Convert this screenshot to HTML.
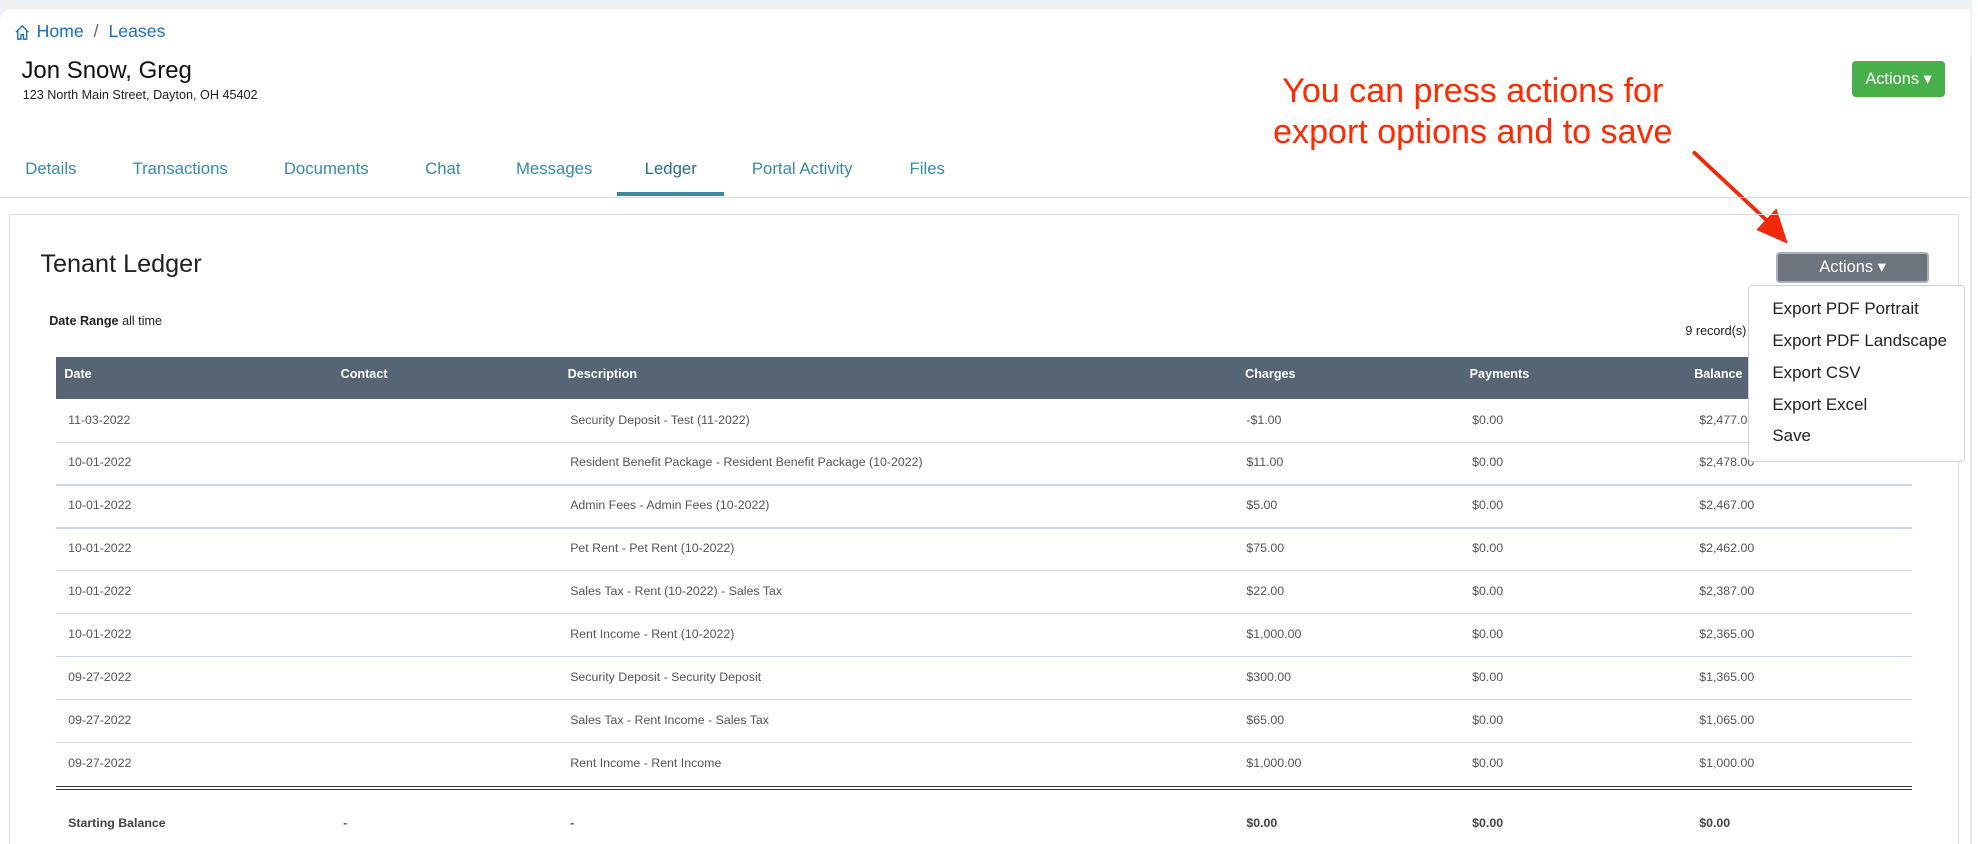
<!DOCTYPE html>
<html><head><meta charset="utf-8"><style>
html,body{margin:0;padding:0;}
body{width:1978px;height:843px;overflow:hidden;background:#fff;font-family:"Liberation Sans",sans-serif;}
#w{zoom:1.2615;width:1568px;height:669px;position:relative;background:#eef1f4;overflow:hidden;}
.a{position:absolute;white-space:nowrap;}
.card{position:absolute;left:0;top:7px;width:1562px;height:662px;background:#fff;border-top-left-radius:10px;}
.tab{position:absolute;top:126px;font-size:13.3px;color:#3a8ba6;}
.th{position:absolute;top:291px;font-size:10px;font-weight:bold;color:#fff;}
.td{position:absolute;font-size:9.8px;color:#555;}
.dd{position:absolute;left:1405px;font-size:13.4px;color:#222;}
</style></head><body><div id="w">
<div class="card"></div>
<div class="a" style="left:1562px;top:45px;width:1px;height:624px;background:#e3e6ea"></div>
<div class="a" style="left:1563px;top:0;width:5px;height:669px;background:#fff"></div>
<svg class="a" style="left:11px;top:19px" width="13" height="13" viewBox="0 0 13 13"><path d="M1.5 6.5 L6.5 1.5 L11.5 6.5 M3 5 V12 H5.5 V8.5 H7.5 V12 H10 V5" fill="none" stroke="#1a6fc4" stroke-width="1.1"/></svg>
<div class="a" style="left:29px;top:17px;font-size:14px;color:#1a6fc4">Home <span style="color:#666;margin:0 4px">/</span> Leases</div>
<div class="a" style="left:17px;top:45px;font-size:19px;color:#111">Jon Snow, Greg</div>
<div class="a" style="left:18px;top:70px;font-size:10px;color:#222">123 North Main Street, Dayton, OH 45402</div>
<div class="a" style="left:1468px;top:48px;width:74px;height:29px;background:#47b04b;border-radius:3px;color:#fff;font-size:13px;line-height:29px;text-align:center">Actions &#9662;</div>
<div class="a" style="left:1000px;top:56px;width:335px;text-align:center;font-size:27px;line-height:33px;color:#ff2a00">You can press actions for<br>export options and to save</div>
<svg class="a" style="left:1330px;top:110px" width="100" height="95"><line x1="12" y1="10" x2="74" y2="68" stroke="#f0290a" stroke-width="3"/><polygon points="87,83 62,72 78,55" fill="#f0290a"/></svg>
<div class="tab" style="left:20px">Details</div>
<div class="tab" style="left:105px">Transactions</div>
<div class="tab" style="left:225px">Documents</div>
<div class="tab" style="left:337px">Chat</div>
<div class="tab" style="left:409px">Messages</div>
<div class="tab" style="left:511px;color:#2f6f86">Ledger</div>
<div class="tab" style="left:596px">Portal Activity</div>
<div class="tab" style="left:721px">Files</div>
<div class="a" style="left:489px;top:152px;width:85px;height:3px;background:#3d89a1"></div>
<div class="a" style="left:0;top:156px;width:1562px;height:1px;background:#dde0e3"></div>
<div class="a" style="left:7px;top:170px;width:1544px;height:510px;border:1px solid #dcdfe2"></div>
<div class="a" style="left:32px;top:198px;font-size:20px;color:#222">Tenant Ledger</div>
<div class="a" style="left:1408px;top:200px;width:118px;height:21px;background:#6c757d;border:2px solid #a9b0b7;border-radius:3px;color:#fff;font-size:13px;line-height:21px;text-align:center">Actions &#9662;</div>
<div class="a" style="left:39px;top:249px;font-size:10px;color:#222"><b>Date Range</b> all time</div>
<div class="a" style="left:1336px;top:257px;font-size:10px;color:#222">9 record(s)</div>
<div class="a" style="left:44px;top:283px;width:1472px;height:33px;background:#566474"></div>
<div class="th" style="left:51px">Date</div><div class="th" style="left:270px">Contact</div><div class="th" style="left:450px">Description</div><div class="th" style="left:987px">Charges</div><div class="th" style="left:1165px">Payments</div><div class="th" style="left:1343px">Balance</div>
<div id="rows"></div>
<div class="a" style="left:44px;top:623px;width:1472px;height:2px;border-top:1px solid #333;border-bottom:1px solid #333"></div>
<div class="td" style="left:54px;top:647px;font-weight:bold;color:#444">Starting Balance</div>
<div class="td" style="left:272px;top:647px;font-weight:bold">-</div>
<div class="td" style="left:452px;top:647px;font-weight:bold">-</div>
<div class="td" style="left:988px;top:647px;font-weight:bold;color:#444">$0.00</div>
<div class="td" style="left:1167px;top:647px;font-weight:bold;color:#444">$0.00</div>
<div class="td" style="left:1347px;top:647px;font-weight:bold;color:#444">$0.00</div>
<div class="a" style="left:1386px;top:226px;width:170px;height:139px;background:#fff;border:1px solid #cfd3d7;border-radius:3px"></div>
<div class="dd" style="top:237px">Export PDF Portrait</div>
<div class="dd" style="top:262px">Export PDF Landscape</div>
<div class="dd" style="top:288px">Export CSV</div>
<div class="dd" style="top:313px">Export Excel</div>
<div class="dd" style="top:338px">Save</div>
</div>
<script>
var d=[["11-03-2022","Security Deposit - Test (11-2022)","-$1.00","$2,477.00"],["10-01-2022","Resident Benefit Package - Resident Benefit Package (10-2022)","$11.00","$2,478.00"],["10-01-2022","Admin Fees - Admin Fees (10-2022)","$5.00","$2,467.00"],["10-01-2022","Pet Rent - Pet Rent (10-2022)","$75.00","$2,462.00"],["10-01-2022","Sales Tax - Rent (10-2022) - Sales Tax","$22.00","$2,387.00"],["10-01-2022","Rent Income - Rent (10-2022)","$1,000.00","$2,365.00"],["09-27-2022","Security Deposit - Security Deposit","$300.00","$1,365.00"],["09-27-2022","Sales Tax - Rent Income - Sales Tax","$65.00","$1,065.00"],["09-27-2022","Rent Income - Rent Income","$1,000.00","$1,000.00"]];
var h="";d.forEach(function(r,i){var t=327+i*34;
h+='<div class="td" style="left:54px;top:'+t+'px">'+r[0]+'</div><div class="td" style="left:452px;top:'+t+'px">'+r[1]+'</div><div class="td" style="left:988px;top:'+t+'px">'+r[2]+'</div><div class="td" style="left:1167px;top:'+t+'px">$0.00</div><div class="td" style="left:1347px;top:'+t+'px">'+r[3]+'</div>';
if(i<8)h+='<div class="a" style="left:44px;top:'+(t+23)+'px;width:1472px;height:1px;background:#c9d6e3"></div>';});
document.getElementById("rows").outerHTML=h;
</script>
</body></html>
